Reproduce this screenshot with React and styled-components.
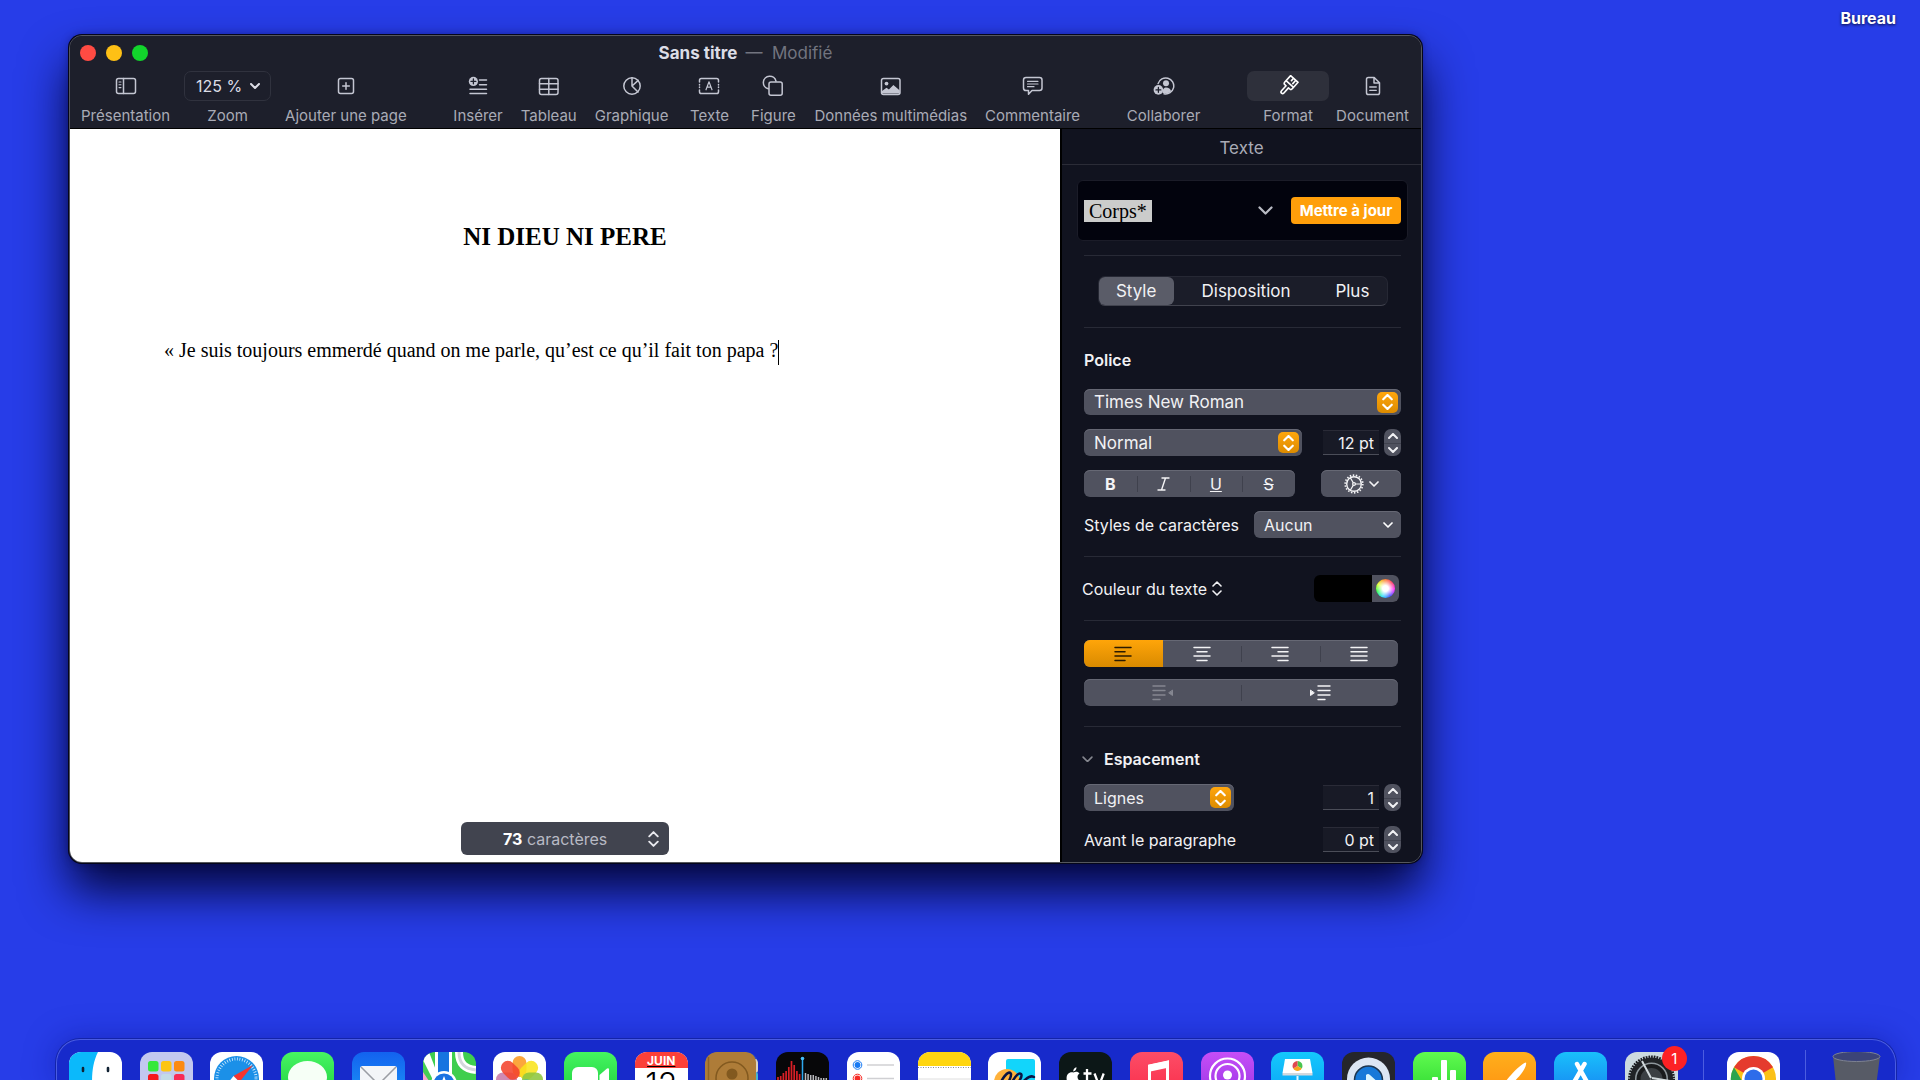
import React from "react";
import styled, { createGlobalStyle, css } from "styled-components";

const ui = `Inter, "Liberation Sans", sans-serif`;
const serif = `"Liberation Serif", serif`;
const c = {
  toolbar: "#1d1f2b",
  panel: "#11131f",
  control: "#50525f",
  line: "#282a36",
  orange: "#ff9f0a",
  text: "#f1f1f4",
  soft: "#a9abb6",
};

const Global = createGlobalStyle`
  *, *::before, *::after { box-sizing: border-box; }
  body { margin: 0; background: #273de8; font-family: ${ui}; }
  button, select, input { font: inherit; color: inherit; margin: 0; padding: 0; border: 0; background: none; border-radius: 0; }
  svg { display: block; flex: none; }
`;

/* ---------- desktop ---------- */
const Desktop = styled.div`
  height: 100vh;
  min-height: 950px;
  overflow: hidden;
  display: flex;
  flex-direction: column;
  background: #273de8;
`;
const DesktopName = styled.header`
  height: 35px;
  flex: none;
  padding: 8px 24px 0 0;
  text-align: right;
  color: #fff;
  font-size: 16px;
  line-height: 20px;
  font-weight: 700;
  text-shadow: 0 1px 3px rgba(0, 0, 20, 0.8);
`;
const Window = styled.main`
  margin: 0 498px 0 69px;
  border: 1px solid #55575d;
  border-radius: 13px;
  flex: none;
  overflow: hidden;
  background: ${c.toolbar};
  box-shadow: 0 0 0 1px #05061a, 0 0 8px rgba(0, 0, 60, 0.4), 0 28px 48px rgba(0, 0, 40, 0.9);
`;

/* ---------- toolbar ---------- */
const TitleBar = styled.header`
  background: ${c.toolbar};
  border-bottom: 1px solid #000;
`;
const TitleRow = styled.div`
  display: grid;
  grid-template-columns: 1fr auto 1fr;
  align-items: center;
  height: 34px;
  padding: 0 10px;
`;
const Lights = styled.div`
  display: flex;
  gap: 10px;
`;
const Light = styled.button`
  width: 16px;
  height: 16px;
  border-radius: 50%;
  background: ${(p) => p.$color};
`;
const Title = styled.h1`
  margin: 0;
  font-size: 17px;
  line-height: 20px;
  font-weight: 700;
  color: #dcdde6;
  span { margin-left: 4px; font-weight: 400; color: #72747f; }
`;
const Tools = styled.div`
  display: flex;
  justify-content: space-between;
  padding: 1px 12px 0 11px;
  height: 58px;
`;
const Group = styled.div`
  display: flex;
  gap: ${(p) => p.$gap}px;
`;
const toolBase = css`
  display: flex;
  flex-direction: column;
  align-items: center;
  gap: 5px;
  min-width: 46px;
  font-size: 15px;
  line-height: 20px;
  color: ${c.soft};
  white-space: nowrap;
`;
const ToolButton = styled.button`${toolBase}`;
const ToolLabel = styled.label`${toolBase}`;
const ToolIcon = styled.span`
  display: grid;
  place-items: center;
  height: 30px;
  width: ${(p) => (p.$on ? "82px" : "auto")};
  border-radius: 7px;
  background: ${(p) => (p.$on ? "#2e303b" : "none")};
  color: ${(p) => (p.$on ? "#fff" : "#c4c6d2")};
`;
const ZoomBox = styled.span`
  display: grid;
  grid-template-columns: 1fr 30px;
  align-items: center;
  width: 87px;
  height: 30px;
  border: 1px solid #30323e;
  border-radius: 7px;
  color: #dcdde6;
  select {
    grid-area: 1 / 1 / 2 / 3;
    appearance: none;
    padding-left: 11px;
    font-size: 16px;
    line-height: 20px;
    outline: 0;
  }
  svg { grid-area: 1 / 2; justify-self: center; pointer-events: none; }
`;

/* ---------- document ---------- */
const Body = styled.div`
  display: grid;
  grid-template-columns: 1fr 361px;
`;
const Page = styled.article`
  display: flex;
  flex-direction: column;
  background: #fff;
  color: #000;
  font-family: ${serif};
  padding: 94px 94px 7px;
`;
const DocTitle = styled.h2`
  margin: 0 0 85px;
  text-align: center;
  font-size: 25px;
  line-height: 28px;
  font-weight: 700;
`;
const Paragraph = styled.p`
  margin: 0;
  font-size: 20px;
  line-height: 28px;
`;
const Caret = styled.span`
  display: inline-block;
  width: 1px;
  height: 25px;
  background: #000;
  vertical-align: middle;
`;
const Counter = styled.button`
  display: flex;
  align-items: center;
  justify-content: space-between;
  align-self: center;
  width: 208px;
  height: 33px;
  margin-top: auto;
  padding: 0 10px 0 42px;
  border-radius: 6px;
  background: #41444f;
  color: #b8bac4;
  font-family: ${ui};
  font-size: 16px;
  line-height: 20px;
  b { color: #fff; }
  svg { color: #e8e9ee; }
`;

/* ---------- inspector ---------- */
const Inspector = styled.aside`
  border-left: 2px solid #000;
  background: ${c.panel};
  color: ${c.text};
  font-size: 16px;
  line-height: 20px;
`;
const PanelName = styled.h2`
  margin: 0;
  height: 36px;
  padding: 9px 0 6px;
  border-bottom: 1px solid #2b2c37;
  text-align: center;
  font-size: 17px;
  line-height: 20px;
  font-weight: 400;
  color: ${c.soft};
`;
const StyleCard = styled.div`
  display: flex;
  align-items: center;
  margin: 15px 13px 14px 15px;
  height: 61px;
  padding: 0 6px;
  border: 1px solid #1b1c28;
  border-radius: 6px;
  background: #02030d;
`;
const StyleSelect = styled.button`
  flex: 1;
  display: flex;
  align-items: center;
  justify-content: space-between;
  margin-right: 18px;
  color: #b9bbc4;
  mark {
    padding: 0 5px;
    background: #cbcccb;
    color: #000;
    font: 20px/22px ${serif};
  }
`;
const Update = styled.button`
  width: 110px;
  height: 27px;
  border-radius: 4px;
  background: ${c.orange};
  color: #fff;
  font-size: 15px;
  line-height: 20px;
  font-weight: 700;
  white-space: nowrap;
`;
const Section = styled.section`
  display: flex;
  flex-direction: column;
  gap: ${(p) => p.$gap || 14}px;
  margin: 0 20px 0 22px;
  padding: ${(p) => p.$pad};
  border-top: 1px solid ${c.line};
`;
const Row = styled.div`
  display: flex;
  align-items: center;
  justify-content: space-between;
`;
const Heading = styled.h3`
  display: flex;
  align-items: center;
  gap: 11px;
  margin: 0 0 ${(p) => p.$after || 0}px;
  font-size: 16px;
  line-height: 20px;
  font-weight: 600;
  svg { color: #85878f; margin-left: -2px; }
`;
const Tabs = styled.div`
  display: grid;
  grid-template-columns: 75fr 144fr 68fr;
  align-self: center;
  width: 290px;
  height: 30px;
  border: 1px solid #262834;
  border-bottom-color: #41434e;
  border-radius: 7px;
  background: #1b1d29;
`;
const Tab = styled.button`
  border-radius: 6px;
  background: ${(p) => (p.$on ? "#5a5c68" : "none")};
  font-size: 17px;
  line-height: 20px;
`;
const SelectBox = styled.span`
  display: grid;
  grid-template-columns: 1fr 21px;
  align-items: center;
  width: ${(p) => p.$width};
  height: ${(p) => p.$height || 27}px;
  padding-right: 3px;
  border-radius: 6px;
  background: ${c.control};
  box-shadow: inset 0 1px 0 #666874;
  select {
    grid-area: 1 / 1 / 2 / 3;
    appearance: none;
    width: 100%;
    padding-left: 10px;
    font-size: ${(p) => (p.$large ? 17 : 16)}px;
    line-height: 20px;
    outline: 0;
  }
`;
const Badge = styled.span`
  grid-area: 1 / 2;
  display: grid;
  place-items: center;
  height: 21px;
  border-radius: 5px;
  background: ${(p) => (p.$plain ? "none" : "linear-gradient(#ffa60d, #dc8b00)")};
  color: #fff;
  pointer-events: none;
`;
const Numeric = styled.span`
  display: flex;
  align-items: center;
  gap: 5px;
`;
const Field = styled.input`
  width: 56px;
  height: 25px;
  padding-right: 5px;
  border-top: 1px solid #2a2b37;
  border-bottom: 1px solid #4b4d58;
  background: #181a26;
  text-align: right;
  outline: 0;
`;
const Stepper = styled.span`
  display: grid;
  grid-template-rows: 1fr 1fr;
  width: 17px;
  height: 27px;
  border-radius: 7px;
  overflow: hidden;
  background: ${c.control};
  button { display: grid; place-items: center; }
  button + button { border-top: 1px solid #41434f; }
`;
const Bar = styled.div`
  display: grid;
  grid-auto-flow: column;
  grid-auto-columns: 1fr;
  width: ${(p) => p.$width};
  height: 27px;
  border-radius: 6px;
  overflow: hidden;
  background: ${c.control};
  box-shadow: inset 0 1px 0 #666874;
`;
const Segment = styled.button`
  display: grid;
  place-items: center;
  color: ${(p) => (p.$dim ? "#858791" : "#f4f4f6")};
  ${(p) => p.$on && css`background: linear-gradient(#ffa509, #d98a00); color: #2b1a00;`}
  ${(p) => p.$rule && css`
    background: linear-gradient(#3f414d, #3f414d) left center / 1px 16px no-repeat;
  `}
`;
const Plain = styled.button`
  display: flex;
  align-items: center;
  gap: 5px;
  margin-left: -2px;
`;
const Swatch = styled.div`
  display: flex;
  width: 85px;
  height: 27px;
  margin-right: 2px;
  border-radius: 6px;
  overflow: hidden;
  background: #000;
  button:first-child { flex: 1; }
  button:last-child { display: grid; place-items: center; width: 27px; background: ${c.control}; }
`;
const Wheel = styled.span`
  width: 19px;
  height: 19px;
  border-radius: 50%;
  background: radial-gradient(circle, #fff 22%, rgba(255, 255, 255, 0) 68%),
    conic-gradient(#ff4466, #ff33ff, #4455ff, #33ddff, #33ff55, #e6ff33, #ff8833, #ff4466);
  transform: rotate(45deg);
`;

/* ---------- dock ---------- */
const DockBar = styled.nav`
  display: flex;
  justify-content: space-between;
  align-items: flex-start;
  flex: none;
  height: 41px;
  margin: auto 24px 0 56px;
  padding: 0 12px;
  border: 1px solid #4a5ce2;
  border-bottom: 0;
  border-radius: 24px 24px 0 0;
  background: #172acb;
  box-shadow: 0 0 0 1px #1424a8, 0 0 30px rgba(10, 20, 150, 0.5);
`;
const DockApp = styled.a`
  position: relative;
  margin-top: 12px;
  width: 53px;
  height: 53px;
  color: #000;
`;
const Tile = styled.span`
  display: block;
  height: 53px;
  border-radius: ${(p) => (p.$bare ? 0 : "12px")};
  overflow: hidden;
  background: ${(p) => p.$bg};
`;
const DockBadge = styled.span`
  position: absolute;
  top: -6px;
  right: -9px;
  width: 25px;
  height: 25px;
  border-radius: 50%;
  background: #fc2125;
  color: #fff;
  font-size: 15px;
  line-height: 25px;
  text-align: center;
`;
const DockRule = styled.span`
  width: 1px;
  height: 60px;
  margin: 10px 6px 0 7px;
  background: #4c5de0;
`;
const CalMonth = styled.span`
  display: block;
  height: 16px;
  background: #fb4038;
  color: #fff;
  font-size: 12px;
  line-height: 18px;
  font-weight: 700;
  text-align: center;
`;
const CalDay = styled.span`
  display: block;
  font-size: 32px;
  line-height: 34px;
  font-weight: 300;
  text-align: center;
`;

/* ---------- drawings ---------- */
const Line = ({ w = 20, h = 20, vb, sw = 1.5, children }) => (
  <svg width={w} height={h} viewBox={vb || `0 0 ${w} ${h}`} fill="none" stroke="currentColor" strokeWidth={sw} strokeLinecap="round" strokeLinejoin="round" aria-hidden="true">
    {children}
  </svg>
);
const Down = ({ w = 10, sw = 2 }) => (
  <Line w={w} h={w * 0.6} vb="0 0 10 6" sw={sw}><path d="M1 1l4 4 4-4" /></Line>
);
const Up = () => <Line w={10} h={6} vb="0 0 10 6" sw={2}><path d="M1 5l4-4 4 4" /></Line>;
const UpDown = ({ w = 11, h = 16, sw = 1.8 }) => (
  <Line w={w} h={h} vb="0 0 10 15" sw={sw}><path d="M1 5l4-4 4 4M1 10l4 4 4-4" /></Line>
);

const icons = {
  sidebar: <Line w={22} h={18} vb="0 0 22 18"><rect x="1.5" y="1.5" width="19" height="15" rx="2" /><path d="M8.5 1.5v15" /><path d="M4 5h2M4 7.8h2M4 10.6h2" strokeWidth="1.1" /></Line>,
  add: <Line w={18} h={18}><rect x="1.5" y="1.5" width="15" height="15" rx="2" /><path d="M9 5.7v6.6M5.7 9h6.6" /></Line>,
  insert: <Line w={20} h={20}><path d="M11.5 4h7M11.5 8.7h7M2 13.2h16.5M2 17.6h16.5" /><circle cx="5.4" cy="5.4" r="4.6" fill="currentColor" stroke="none" /><path d="M5.4 3v4.8M3 5.4h4.8" stroke={c.toolbar} strokeWidth="1.3" /></Line>,
  table: <Line w={22} h={19}><rect x="1.5" y="1.5" width="18.5" height="16" rx="2" /><path d="M10.8 1.5v16M1.5 6.8H20M1.5 12.2H20" /></Line>,
  chart: <Line w={20} h={20}><circle cx="10" cy="10" r="8.2" /><path d="M10 1.8V10l6 6M10 10l6.2-5.6" /></Line>,
  textbox: (
    <Line w={22} h={18}>
      <path d="M1.5 5V3.3c0-1.2.6-1.8 1.8-1.8h15.4c1.2 0 1.8.6 1.8 1.8V5M1.5 13v1.7c0 1.2.6 1.8 1.8 1.8h15.4c1.2 0 1.8-.6 1.8-1.8V13M1.5 7.6v.3M1.5 10.1v.3M20.5 7.6v.3M20.5 10.1v.3" />
      <path d="M8 12.8l3-8 3 8M9 10.2h4" strokeWidth="1.2" />
    </Line>
  ),
  shape: <Line w={22} h={22}><path d="M6.2 13.8A6.4 6.4 0 1 1 14 6.2" /><rect x="7" y="7" width="13.2" height="13.2" rx="2" /></Line>,
  media: <Line w={22} h={19}><rect x="1.5" y="1.5" width="18.5" height="16" rx="2" /><circle cx="6.5" cy="6.6" r="1.9" fill="currentColor" stroke="none" /><path d="M2 14l4.5-3.2 2.4 1.6L13.4 8l6.4 5.4v3.1H2z" fill="currentColor" stroke="none" /></Line>,
  comment: <Line w={22} h={20}><path d="M4 1.5h13.5c1.7 0 2.5.8 2.5 2.5v8c0 1.7-.8 2.5-2.5 2.5H10l-3.500 3.700v-3.700H4c-1.700 0-2.500-.8-2.500-2.500V4c0-1.700.8-2.500 2.500-2.500z" /><path d="M5.500 5.300h10.500M5.500 8h10.500M5.500 10.700h6.500" strokeWidth="1.2" /></Line>,
  collab: (
    <Line w={22} h={20}>
      <path d="M5.100 7.600a8 8 0 1 1 6 10.200" />
      <circle cx="13" cy="7.3" r="3" fill="currentColor" stroke="none" />
      <path d="M9.500 17c0-3.800 1.500-5.400 3.700-5.400 2.500 0 4.300 1.200 4.800 3.400-1.500 2-4.500 3.200-8.500 2z" fill="currentColor" stroke="none" />
      <circle cx="5.4" cy="13.9" r="4.8" fill="currentColor" stroke="none" />
      <path d="M5.400 11.500v4.800M3 13.900h4.800" stroke={c.toolbar} strokeWidth="1.3" />
    </Line>
  ),
  brush: (
    <Line w={22} h={22} sw={1.6}>
      <g transform="rotate(42 11 11)">
        <path d="M6 1.500h10v8.700c0 1.200-.5 1.900-1.700 1.900h-1.700v6.800c0 2.400-3.200 2.400-3.200 0v-6.800H7.700c-1.200 0-1.700-.7-1.700-1.900zM6 8.300h10M10 1.500v3.200M13 1.500v4.500" />
      </g>
    </Line>
  ),
  doc: <Line w={16} h={20}><path d="M3.300 1.500h5.900l5.300 5.300v9.900c0 1.200-.6 1.800-1.800 1.800H3.300c-1.200 0-1.800-.6-1.800-1.800V3.300c0-1.200.6-1.800 1.800-1.800zM9 1.500V7h5.500" /><path d="M4.700 11h6.600M4.700 14.300h6.600" strokeWidth="1.3" /></Line>,
  gear: (
    <Line w={20} h={20} sw={1.4}>
      <circle cx="10" cy="10" r="8.8" strokeWidth="1.7" strokeDasharray="1.5 1.572" strokeLinecap="butt" />
      <circle cx="10" cy="10" r="7.3" /><circle cx="10" cy="10" r="1.4" strokeWidth="1.2" />
      <path d="M11.500 10H17M9.200 8.600L6.500 4M9.200 11.400L6.500 16" strokeWidth="1.2" />
    </Line>
  ),
};
const AlignIcon = ({ rows }) => (
  <Line w={18} h={16} sw={1.5}>
    {rows.map(([a, b], i) => <path key={i} d={`M${a} ${1.5 + i * 4.3}H${b}`} />)}
  </Line>
);
const IndentIcon = ({ out }) => (
  <Line w={22} h={16} sw={1.4}>
    <path d={out ? "M1 1h12M1 5.500h12M1 10h12M1 14.500h7" : "M9 1h12M9 5.500h12M9 10h12M9 14.500h7"} />
    <path d={out ? "M20.500 5.500v5L17 8z" : "M1.500 5.500v5L5 8z"} fill="currentColor" strokeWidth="1" />
  </Line>
);

const Art = ({ children }) => <svg width="53" height="53" viewBox="0 0 53 53" aria-hidden="true">{children}</svg>;
const gridColors = ["#35e83a", "#fdc514", "#fb8a12", "#f5181b", "#c3dbe6", "#f82a58", "#b44cf0", "#8a8f99", "#1f9cf5"];
const petals = ["#fb9a22", "#f9e41c", "#8dc63f", "#4fb99f", "#5c8fd6", "#9a6cc9", "#c87aa8", "#f4442e"];
const wave = [2, 3, 6, 8, 12, 18, 14, 8, 5];
const wave2 = [6, 5, 4, 4, 3, 2, 1, 1, 1];

const apps = [
  { name: "Finder", bg: "#fff", art: <Art><path d="M0 0h29c-5 10-6 20-6 32h8v21H0z" fill="#0bb9fb" /><path d="M14 16v3M39 16v3" stroke="#123" strokeWidth="2.6" strokeLinecap="round" /><path d="M10 36c9 8 24 8 33 0" fill="none" stroke="#123" strokeWidth="2" /></Art> },
  { name: "Launchpad", bg: "#c2c8ef", art: <Art>{gridColors.map((f, i) => <rect key={f} x={8 + (i % 3) * 13} y={9 + Math.floor(i / 3) * 13} width="10.5" height="10.5" rx="2.5" fill={f} />)}</Art> },
  { name: "Safari", bg: "#fff", art: <Art><circle cx="26.5" cy="26.5" r="22.5" fill="#1b90e8" /><circle cx="26.5" cy="26.5" r="19.5" fill="none" stroke="#d5edff" strokeWidth="3" strokeDasharray="0.8 1.75" /><path d="M43 13L23.500 24l6 6z" fill="#f5352f" /><path d="M10 41l13.500-17 6 6z" fill="#fff" /></Art> },
  { name: "Messages", bg: "linear-gradient(#47f562, #17c93a)", art: <Art><ellipse cx="26.5" cy="25" rx="19.5" ry="16" fill="#f6fff6" /></Art> },
  { name: "Mail", bg: "linear-gradient(#1362ef, #1c9df8)", art: <Art><rect x="8" y="14" width="37" height="26" rx="2.5" fill="#f3f5f8" /><path d="M9 15l16 16q1.500 1.500 3 0l16-16" fill="none" stroke="#9a9da4" strokeWidth="1.5" /></Art> },
  { name: "Plans", bg: "#3fce4e", art: <Art><path d="M0 0h6l10 26v27H0z" fill="#fff" /><path d="M0 8l9 18v27H0z" fill="#44cf55" /><path d="M0 20l8 12v21H0z" fill="#f6a8cf" /><path d="M12 0h17v53H12z" fill="#fff" /><path d="M15 0h11v53H15z" fill="#1674e0" /><path d="M36 0c0 12 6 17 17 18" fill="none" stroke="#fff" strokeWidth="8" /><path d="M36 0c0 12 6 17 17 18" fill="none" stroke="#d4d7dc" strokeWidth="3" /><circle cx="21" cy="32" r="13" fill="#fff" /><circle cx="21" cy="32" r="10.5" fill="#1a72e2" /><path d="M21 24l5 13-5-2.500-5 2.500z" fill="#fff" /></Art> },
  { name: "Photos", bg: "#fff", art: <Art>{petals.map((f, i) => <rect key={f} x="19.5" y="4" width="14" height="21" rx="7" fill={f} fillOpacity="0.88" transform={`rotate(${i * 45} 26.5 27.5)`} />)}</Art> },
  { name: "FaceTime", bg: "linear-gradient(#45f460, #16c938)", art: <Art><rect x="8" y="15" width="26" height="23" rx="6" fill="#fff" /><path d="M35.500 23l7.500-6.500q2-1 2 1v18q0 2-2 1L35.500 30z" fill="#fff" /></Art> },
  { name: "Calendrier", bg: "#fff", art: <><CalMonth>JUIN</CalMonth><CalDay>12</CalDay></> },
  { name: "Contacts", bg: "#2747c9", art: <Art><rect x="40" y="7" width="13" height="14" rx="3" fill="#d9d2c4" /><rect x="40" y="20" width="13" height="14" rx="3" fill="#47b5cf" /><rect width="51" height="53" rx="10" fill="#ae7c38" /><path d="M3.500 5v48" stroke="#8f6226" strokeWidth="1.5" /><circle cx="27" cy="26" r="16" fill="none" stroke="#82591f" strokeWidth="1.5" /><circle cx="27" cy="22" r="5.5" fill="#82591f" /><path d="M16 36c2-10 20-10 22 0z" fill="#82591f" /></Art> },
  { name: "Dictaphone", bg: "#070709", art: <Art>{wave.map((h, i) => <path key={i} d={`M${2 + i * 2.7} ${27 - h}v${h * 2}`} stroke="#d81f26" strokeWidth="1.7" />)}<path d="M26.500 7v46" stroke="#2ea7ee" strokeWidth="1.5" /><circle cx="26.5" cy="6.5" r="1.8" fill="#46bdf8" />{wave2.map((h, i) => <path key={i} d={`M${29.5 + i * 2.6} ${27 - h}v${h * 2}`} stroke="#b9b9bd" strokeWidth="1.5" />)}</Art> },
  { name: "Rappels", bg: "#fff", art: <Art>{["#187af3", "#f62b25", "#f79b1c"].map((f, i) => <g key={f}><circle cx="10.5" cy={13 + i * 13.5} r="4.3" fill="#fff" stroke={f} strokeWidth="1" /><circle cx="10.5" cy={13 + i * 13.5} r="2.9" fill={f} /><path d={`M20 ${13 + i * 13.5}h27`} stroke="#d0d0d3" strokeWidth="1.5" /></g>)}</Art> },
  { name: "Notes", bg: "#fff", art: <Art><path d="M0 0h53v14H0z" fill="#ffd50f" /><path d="M0 15.500h53" stroke="#8c8c8c" strokeWidth="1" strokeDasharray="1 1.5" /><path d="M0 27h53M0 39h53" stroke="#dedede" /></Art> },
  { name: "Freeform", bg: "#fff", art: <Art><rect x="18" y="7" width="29" height="34" rx="2" fill="#12d5fb" /><circle cx="19" cy="30" r="13" fill="#ffb23c" /><path d="M8 42c5-16 13-25 15-20 1 4-7 14-3 12s9-15 13-12c3 3-6 10-1 9s8-9 14-6" fill="none" stroke="#0b1544" strokeWidth="2.5" strokeLinecap="round" /></Art> },
  { name: "TV", bg: "#0c1717", art: <Art><path d="M14.500 20.500c2.300-1.300 4.700-.8 6 1-3 2-2.500 6 .7 7.500-1.600 4-3.700 6-6.200 4.700-2.500 1.300-5.300.3-7-4.700-1.500-5 1-9.500 6.500-8.500zM14.200 19.500c0-2.300 1.300-3.900 3.300-4.300.2 2.300-1.300 4-3.300 4.300z" fill="#fff" /><path d="M28 17v13.500q0 3.500 4 3M24.500 21.500h8M35.500 21.500l4.600 12 4.600-12" fill="none" stroke="#fff" strokeWidth="2.3" /></Art> },
  { name: "Musique", bg: "linear-gradient(#fc4d67, #fa2744)", art: <Art><path d="M19.500 37V14l18-4v23" fill="none" stroke="#fff" strokeWidth="3" /><path d="M18 13l21-4.500v7L18 20z" fill="#fff" /><ellipse cx="15.5" cy="38" rx="5.5" ry="4.5" fill="#fff" /><ellipse cx="33.5" cy="34" rx="5.5" ry="4.5" fill="#fff" /></Art> },
  { name: "Podcasts", bg: "linear-gradient(#c64ef7, #9232e2)", art: <Art><g fill="none" stroke="#fff" strokeWidth="2.2"><circle cx="26.5" cy="24" r="17.5" /><circle cx="26.5" cy="24" r="12" /></g><circle cx="26.5" cy="23" r="4.5" fill="#fff" /><rect x="22.5" y="30" width="8" height="15" rx="4" fill="#fff" /></Art> },
  { name: "Keynote", bg: "linear-gradient(#14c8fc, #0a9bf5)", art: <Art><path d="M26.500 24v22" stroke="#e5f6ff" strokeWidth="2" /><path d="M14 7h25l2.500 14h-30z" fill="#fff" /><path d="M11.500 21h30v2.500h-30z" fill="#d3d8dd" /><path d="M26.500 14V9a5 5 0 0 1 4.300 7.500z" fill="#49c44f" /><path d="M26.500 14l4.300 2.500a5 5 0 0 1-8.600 0z" fill="#f8a51d" /><path d="M26.500 14l-4.300 2.500A5 5 0 0 1 26.500 9z" fill="#e0484f" /></Art> },
  { name: "QuickTime", bg: "#25262c", art: <Art><circle cx="26.5" cy="27" r="21.5" fill="#dce6f4" /><circle cx="26.5" cy="28" r="14" fill="#1779d9" /><circle cx="26.5" cy="28" r="14" fill="none" stroke="#1d3650" strokeWidth="1.5" /><path d="M24 23q2-2 4 0l10 9-14 6z" fill="#d9f4ff" /></Art> },
  { name: "Numbers", bg: "linear-gradient(#60fb4f, #22cf2b)", art: <Art><g fill="#fff"><rect x="10" y="32" width="6" height="13" rx="1" /><rect x="19" y="25" width="6" height="20" rx="1" /><rect x="28" y="8" width="6" height="37" rx="1" /><rect x="37" y="18" width="6" height="27" rx="1" /></g></Art> },
  { name: "Pages", bg: "linear-gradient(#ffaf1c, #ff8b0d)", art: <Art><path d="M43 10.500c1.500 5-9 18-16 22l-4-3.500C28 22 39 11 43 10.500z" fill="#fff" /><path d="M22 30l3.500 3.500L13 44z" fill="#ffe9c9" /></Art> },
  { name: "App Store", bg: "linear-gradient(#19c0fb, #1676f0)", art: <Art><path d="M23 12l15 27M30.500 12L15 39M11 32h31" stroke="#fff" strokeWidth="4.5" strokeLinecap="round" fill="none" /></Art> },
  { name: "Réglages", bg: "#ccdadf", badge: "1", art: <Art><circle cx="26.5" cy="27" r="22" fill="none" stroke="#1b1d20" strokeWidth="3" strokeDasharray="1.7 1" /><circle cx="26.5" cy="27" r="19" fill="#8e979c" stroke="#202326" strokeWidth="5" /><circle cx="26.5" cy="27" r="13" fill="#3a3f43" stroke="#191b1d" strokeWidth="4" /><path d="M27 26l18 3M26 26L17 9M26 28L14 44" stroke="#d0d8db" strokeWidth="2" /></Art> },
  { name: null },
  { name: "Chrome", bg: "#fff", art: <Art><circle cx="26.5" cy="26.5" r="22.5" fill="#fbc116" /><path d="M26.500 26.500L7 15.200A22.500 22.500 0 0 1 46 15.200z" fill="#e53b2e" /><path d="M26.500 49A22.500 22.500 0 0 1 7 15.200l10 17z" fill="#2da44e" /><circle cx="26.5" cy="26.5" r="11.5" fill="#fff" /><circle cx="26.5" cy="26.5" r="9" fill="#2d6cea" /></Art> },
  { name: null },
  { name: "Corbeille", bg: "none", bare: true, art: <Art><path d="M3 4l5 46q18 6 36 0l6-46z" fill="#575b66" /><ellipse cx="26.5" cy="4.5" rx="23.5" ry="5" fill="#3c4478" stroke="#7d8292" strokeWidth="1" /></Art> },
];

/* ---------- composed parts ---------- */
const Tool = ({ icon, label, on }) => (
  <ToolButton type="button" aria-pressed={on}>
    <ToolIcon $on={on}>{icons[icon]}</ToolIcon>
    {label}
  </ToolButton>
);
const Select = ({ label, id, value, width, height, plain, large }) => (
  <SelectBox $width={width} $height={height} $large={large}>
    <select id={id} aria-label={label} defaultValue={value}><option>{value}</option></select>
    <Badge $plain={plain}>{plain ? <Down w={10} sw={1.7} /> : <UpDown sw={2} />}</Badge>
  </SelectBox>
);
const NumberField = ({ label, id, value }) => (
  <Numeric>
    <Field id={id} aria-label={label} defaultValue={value} />
    <Stepper>
      <button type="button" aria-label="Augmenter"><Up /></button>
      <button type="button" aria-label="Diminuer"><Down w={10} /></button>
    </Stepper>
  </Numeric>
);

const aligns = [
  ["Gauche", [[1, 17], [1, 11], [1, 17], [1, 11]]],
  ["Centre", [[1, 17], [4, 14], [1, 17], [4, 14]]],
  ["Droite", [[1, 17], [7, 17], [1, 17], [7, 17]]],
  ["Justifié", [[1, 17], [1, 17], [1, 17], [1, 17]]],
];

export default function App() {
  return (
    <>
      <Global />
      <Desktop>
        <DesktopName>Bureau</DesktopName>
        <Window>
          <TitleBar>
            <TitleRow>
              <Lights>
                <Light type="button" aria-label="Fermer" $color="#ff4b43" />
                <Light type="button" aria-label="Réduire" $color="#fec015" />
                <Light type="button" aria-label="Agrandir" $color="#12d42c" />
              </Lights>
              <Title>Sans titre <span>— &nbsp;Modifié</span></Title>
            </TitleRow>
            <Tools>
              <Group $gap={14}>
                <Tool icon="sidebar" label="Présentation" />
                <ToolLabel>
                  <ZoomBox>
                    <select defaultValue="125 %"><option>125 %</option></select>
                    <Down />
                  </ZoomBox>
                  Zoom
                </ToolLabel>
                <Tool icon="add" label="Ajouter une page" />
              </Group>
              <Group $gap={18}>
                <Tool icon="insert" label="Insérer" />
                <Tool icon="table" label="Tableau" />
                <Tool icon="chart" label="Graphique" />
                <Tool icon="textbox" label="Texte" />
                <Tool icon="shape" label="Figure" />
                <Tool icon="media" label="Données multimédias" />
                <Tool icon="comment" label="Commentaire" />
              </Group>
              <Tool icon="collab" label="Collaborer" />
              <Group $gap={7}>
                <Tool icon="brush" label="Format" on />
                <Tool icon="doc" label="Document" />
              </Group>
            </Tools>
          </TitleBar>
          <Body>
            <Page>
              <DocTitle>NI DIEU NI PERE</DocTitle>
              <Paragraph>« Je suis toujours emmerdé quand on me parle, qu’est ce qu’il fait ton papa ?<Caret /></Paragraph>
              <Counter type="button"><span><b>73</b> caractères</span><UpDown w={11} h={16} /></Counter>
            </Page>
            <Inspector>
              <PanelName>Texte</PanelName>
              <StyleCard>
                <StyleSelect type="button"><mark>Corps*</mark><Down w={15} sw={1.5} /></StyleSelect>
                <Update type="button">Mettre à jour</Update>
              </StyleCard>
              <Section $pad="20px 0 21px">
                <Tabs>
                  <Tab type="button" $on>Style</Tab>
                  <Tab type="button">Disposition</Tab>
                  <Tab type="button">Plus</Tab>
                </Tabs>
              </Section>
              <Section $pad="22px 0 18px">
                <Heading $after={5}>Police</Heading>
                <Select label="Police" value="Times New Roman" width="100%" height={26} large />
                <Row>
                  <Select label="Graisse" value="Normal" width="218px" large />
                  <NumberField label="Corps" value="12 pt" />
                </Row>
                <Row>
                  <Bar $width="211px">
                    <Segment type="button" aria-label="Gras"><b>B</b></Segment>
                    <Segment type="button" aria-label="Italique" $rule><Line w={13} h={14} sw={1.4}><path d="M5 1h7M1 13h7M8.500 1l-4 12" /></Line></Segment>
                    <Segment type="button" aria-label="Souligné" $rule><u>U</u></Segment>
                    <Segment type="button" aria-label="Barré" $rule><s>S</s></Segment>
                  </Bar>
                  <Bar $width="80px">
                    <Segment type="button" aria-label="Options avancées"><Numeric>{icons.gear}<Down w={10} sw={1.7} /></Numeric></Segment>
                  </Bar>
                </Row>
                <Row>
                  <label htmlFor="charstyle">Styles de caractères</label>
                  <Select id="charstyle" value="Aucun" width="147px" plain />
                </Row>
              </Section>
              <Section $pad="18px 0">
                <Row>
                  <Plain type="button">Couleur du texte <UpDown w={10} h={15} sw={1.6} /></Plain>
                  <Swatch>
                    <button type="button" aria-label="Noir" />
                    <button type="button" aria-label="Palette"><Wheel /></button>
                  </Swatch>
                </Row>
              </Section>
              <Section $pad="19px 0 20px" $gap={12}>
                <Bar $width="314px">
                  {aligns.map(([name, rows], i) => (
                    <Segment key={name} type="button" aria-label={name} $on={i === 0} $rule={i > 1}><AlignIcon rows={rows} /></Segment>
                  ))}
                </Bar>
                <Bar $width="314px">
                  <Segment type="button" aria-label="Diminuer le retrait" $dim><IndentIcon out /></Segment>
                  <Segment type="button" aria-label="Augmenter le retrait" $rule><IndentIcon /></Segment>
                </Bar>
              </Section>
              <Section $pad="22px 0 9px" $gap={15}>
                <Heading><Down w={11} sw={1.5} />Espacement</Heading>
                <Row>
                  <Select label="Interligne" value="Lignes" width="150px" />
                  <NumberField label="Valeur de l’interligne" value="1" />
                </Row>
                <Row>
                  <label htmlFor="before">Avant le paragraphe</label>
                  <NumberField id="before" value="0 pt" />
                </Row>
              </Section>
            </Inspector>
          </Body>
        </Window>
        <DockBar aria-label="Dock">
          {apps.map((a, i) =>
            a.name ? (
              <DockApp key={i} href={`#${i}`} aria-label={a.name}>
                <Tile $bg={a.bg} $bare={a.bare}>{a.art}</Tile>
                {a.badge && <DockBadge>{a.badge}</DockBadge>}
              </DockApp>
            ) : (
              <DockRule key={i} />
            )
          )}
        </DockBar>
      </Desktop>
    </>
  );
}
